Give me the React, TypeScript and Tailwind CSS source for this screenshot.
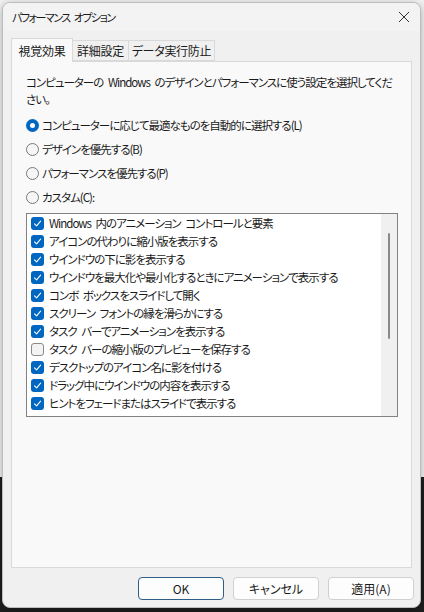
import React from 'react';

const items: { label: string; checked: boolean }[] = [
  { label: 'Windows 内のアニメーション コントロールと要素', checked: true },
  { label: 'アイコンの代わりに縮小版を表示する', checked: true },
  { label: 'ウインドウの下に影を表示する', checked: true },
  { label: 'ウインドウを最大化や最小化するときにアニメーションで表示する', checked: true },
  { label: 'コンボ ボックスをスライドして開く', checked: true },
  { label: 'スクリーン フォントの縁を滑らかにする', checked: true },
  { label: 'タスク バーでアニメーションを表示する', checked: true },
  { label: 'タスク バーの縮小版のプレビューを保存する', checked: false },
  { label: 'デスクトップのアイコン名に影を付ける', checked: true },
  { label: 'ドラッグ中にウインドウの内容を表示する', checked: true },
  { label: 'ヒントをフェードまたはスライドで表示する', checked: true },
];

const radios = [
  { label: 'コンピューターに応じて最適なものを自動的に選択する(L)', selected: true },
  { label: 'デザインを優先する(B)', selected: false },
  { label: 'パフォーマンスを優先する(P)', selected: false },
  { label: 'カスタム(C):', selected: false },
];

const Radio = ({ selected }: { selected: boolean }) =>
  selected ? (
    <span className="w-[13px] h-[13px] rounded-full bg-[#0067c0] flex items-center justify-center shrink-0">
      <span className="w-[5px] h-[5px] rounded-full bg-white" />
    </span>
  ) : (
    <span className="w-[13px] h-[13px] rounded-full border border-[#7a7a7a] bg-[#f6f6f6] shrink-0" />
  );

const Check = ({ checked }: { checked: boolean }) =>
  checked ? (
    <span className="w-[13px] h-[13px] rounded-[3px] bg-[#0067c0] flex items-center justify-center shrink-0">
      <svg width="9" height="9" viewBox="0 0 9 9" fill="none">
        <path d="M1.5 4.8 L3.6 6.8 L7.6 2.2" stroke="white" strokeWidth="1.1" strokeLinecap="round" strokeLinejoin="round" />
      </svg>
    </span>
  ) : (
    <span className="w-[13px] h-[13px] rounded-[3px] border border-[#8a8a8a] bg-[#f3f3f3] shrink-0" />
  );

export default function App() {
  return (
    <div
      className="w-[424px] h-[612px] pt-[2px] px-[2px] bg-[linear-gradient(to_bottom,#f2f2f2_0%,#f2f2f2_78%,#1e1e1e_78%)] text-[11.5px] tracking-[-1px] [word-spacing:3px] text-[#1a1a1a] leading-none [font-feature-settings:'palt']"
      style={{ fontFamily: '"Noto Sans CJK JP", "Noto Sans", sans-serif' }}
    >
      <div className="w-[419px] h-[606px] rounded-lg border border-[#bdbdbd] bg-[#f0f0f0] flex flex-col overflow-hidden shadow-[0_2px_8px_rgba(0,0,0,0.3)]">
        {/* Title bar */}
        <div className="h-[28px] bg-[#f3f3f3] flex items-center justify-between pl-[9px] pr-[9px] shrink-0">
          <span className="text-[11px] tracking-[-1.5px]">パフォーマンス オプション</span>
          <svg width="12" height="12" viewBox="0 0 12 12" className="mr-[1px]">
            <path d="M1 1 L11 11 M11 1 L1 11" stroke="#333" strokeWidth="1" />
          </svg>
        </div>

        {/* Tabs */}
        <div className="flex items-end pl-[8px] h-[30px] shrink-0 text-[12px] tracking-[-0.3px]">
          <div className="h-[24px] w-[62px] justify-center flex items-center bg-[#f9f9f9] border border-b-0 border-[#d9d9d9] relative z-10 -mb-px">
            視覚効果
          </div>
          <div className="h-[21px] w-[56px] justify-center flex items-center border border-l-0 border-[#d9d9d9] bg-[#f0f0f0]">
            詳細設定
          </div>
          <div className="h-[21px] w-[86px] justify-center flex items-center border border-l-0 border-[#d9d9d9] bg-[#f0f0f0]">
            データ実行防止
          </div>
        </div>

        {/* Tab panel */}
        <div className="mx-[8px] h-[507px] bg-[#f9f9f9] border border-[#d9d9d9] flex flex-col pl-[14px] pr-[13px] pt-[12px] shrink-0">
          <p className="leading-[17px] pr-[4px]">
            コンピューターの Windows のデザインとパフォーマンスに使う設定を選択してください。
          </p>
          <div className="flex flex-col gap-[11px] mt-[11px]">
            {radios.map((r) => (
              <div key={r.label} className="flex items-center gap-[3px] h-[13px]">
                <Radio selected={r.selected} />
                <span>{r.label}</span>
              </div>
            ))}
          </div>

          {/* List */}
          <div className="mt-[9px] h-[204px] bg-white border border-[#828282] flex">
            <div className="flex-1 flex flex-col pl-[4px] pt-[3px] gap-[5px]">
              {items.map((it) => (
                <div key={it.label} className="flex items-center gap-[5px] h-[13px] whitespace-nowrap">
                  <Check checked={it.checked} />
                  <span>{it.label}</span>
                </div>
              ))}
            </div>
            <div className="w-[16px] bg-[#f0f0f0] flex justify-center pt-[19px]">
              <div className="w-[2px] h-[106px] bg-[#8a8a8a] rounded-full" />
            </div>
          </div>
        </div>

        {/* Buttons */}
        <div className="flex justify-end gap-[9px] pr-[6px] pt-[9px] tracking-normal [word-spacing:0px] text-[12px]">
          <button className="w-[86px] h-[23px] rounded-[4px] bg-[#fdfdfd] border border-[#2f5d86]">
            OK
          </button>
          <button className="w-[86px] h-[23px] rounded-[4px] bg-[#fdfdfd] border border-[#d0d0d0]">
            キャンセル
          </button>
          <button className="w-[86px] h-[23px] rounded-[4px] bg-[#fdfdfd] border border-[#d0d0d0]">
            適用(A)
          </button>
        </div>
      </div>
    </div>
  );
}
